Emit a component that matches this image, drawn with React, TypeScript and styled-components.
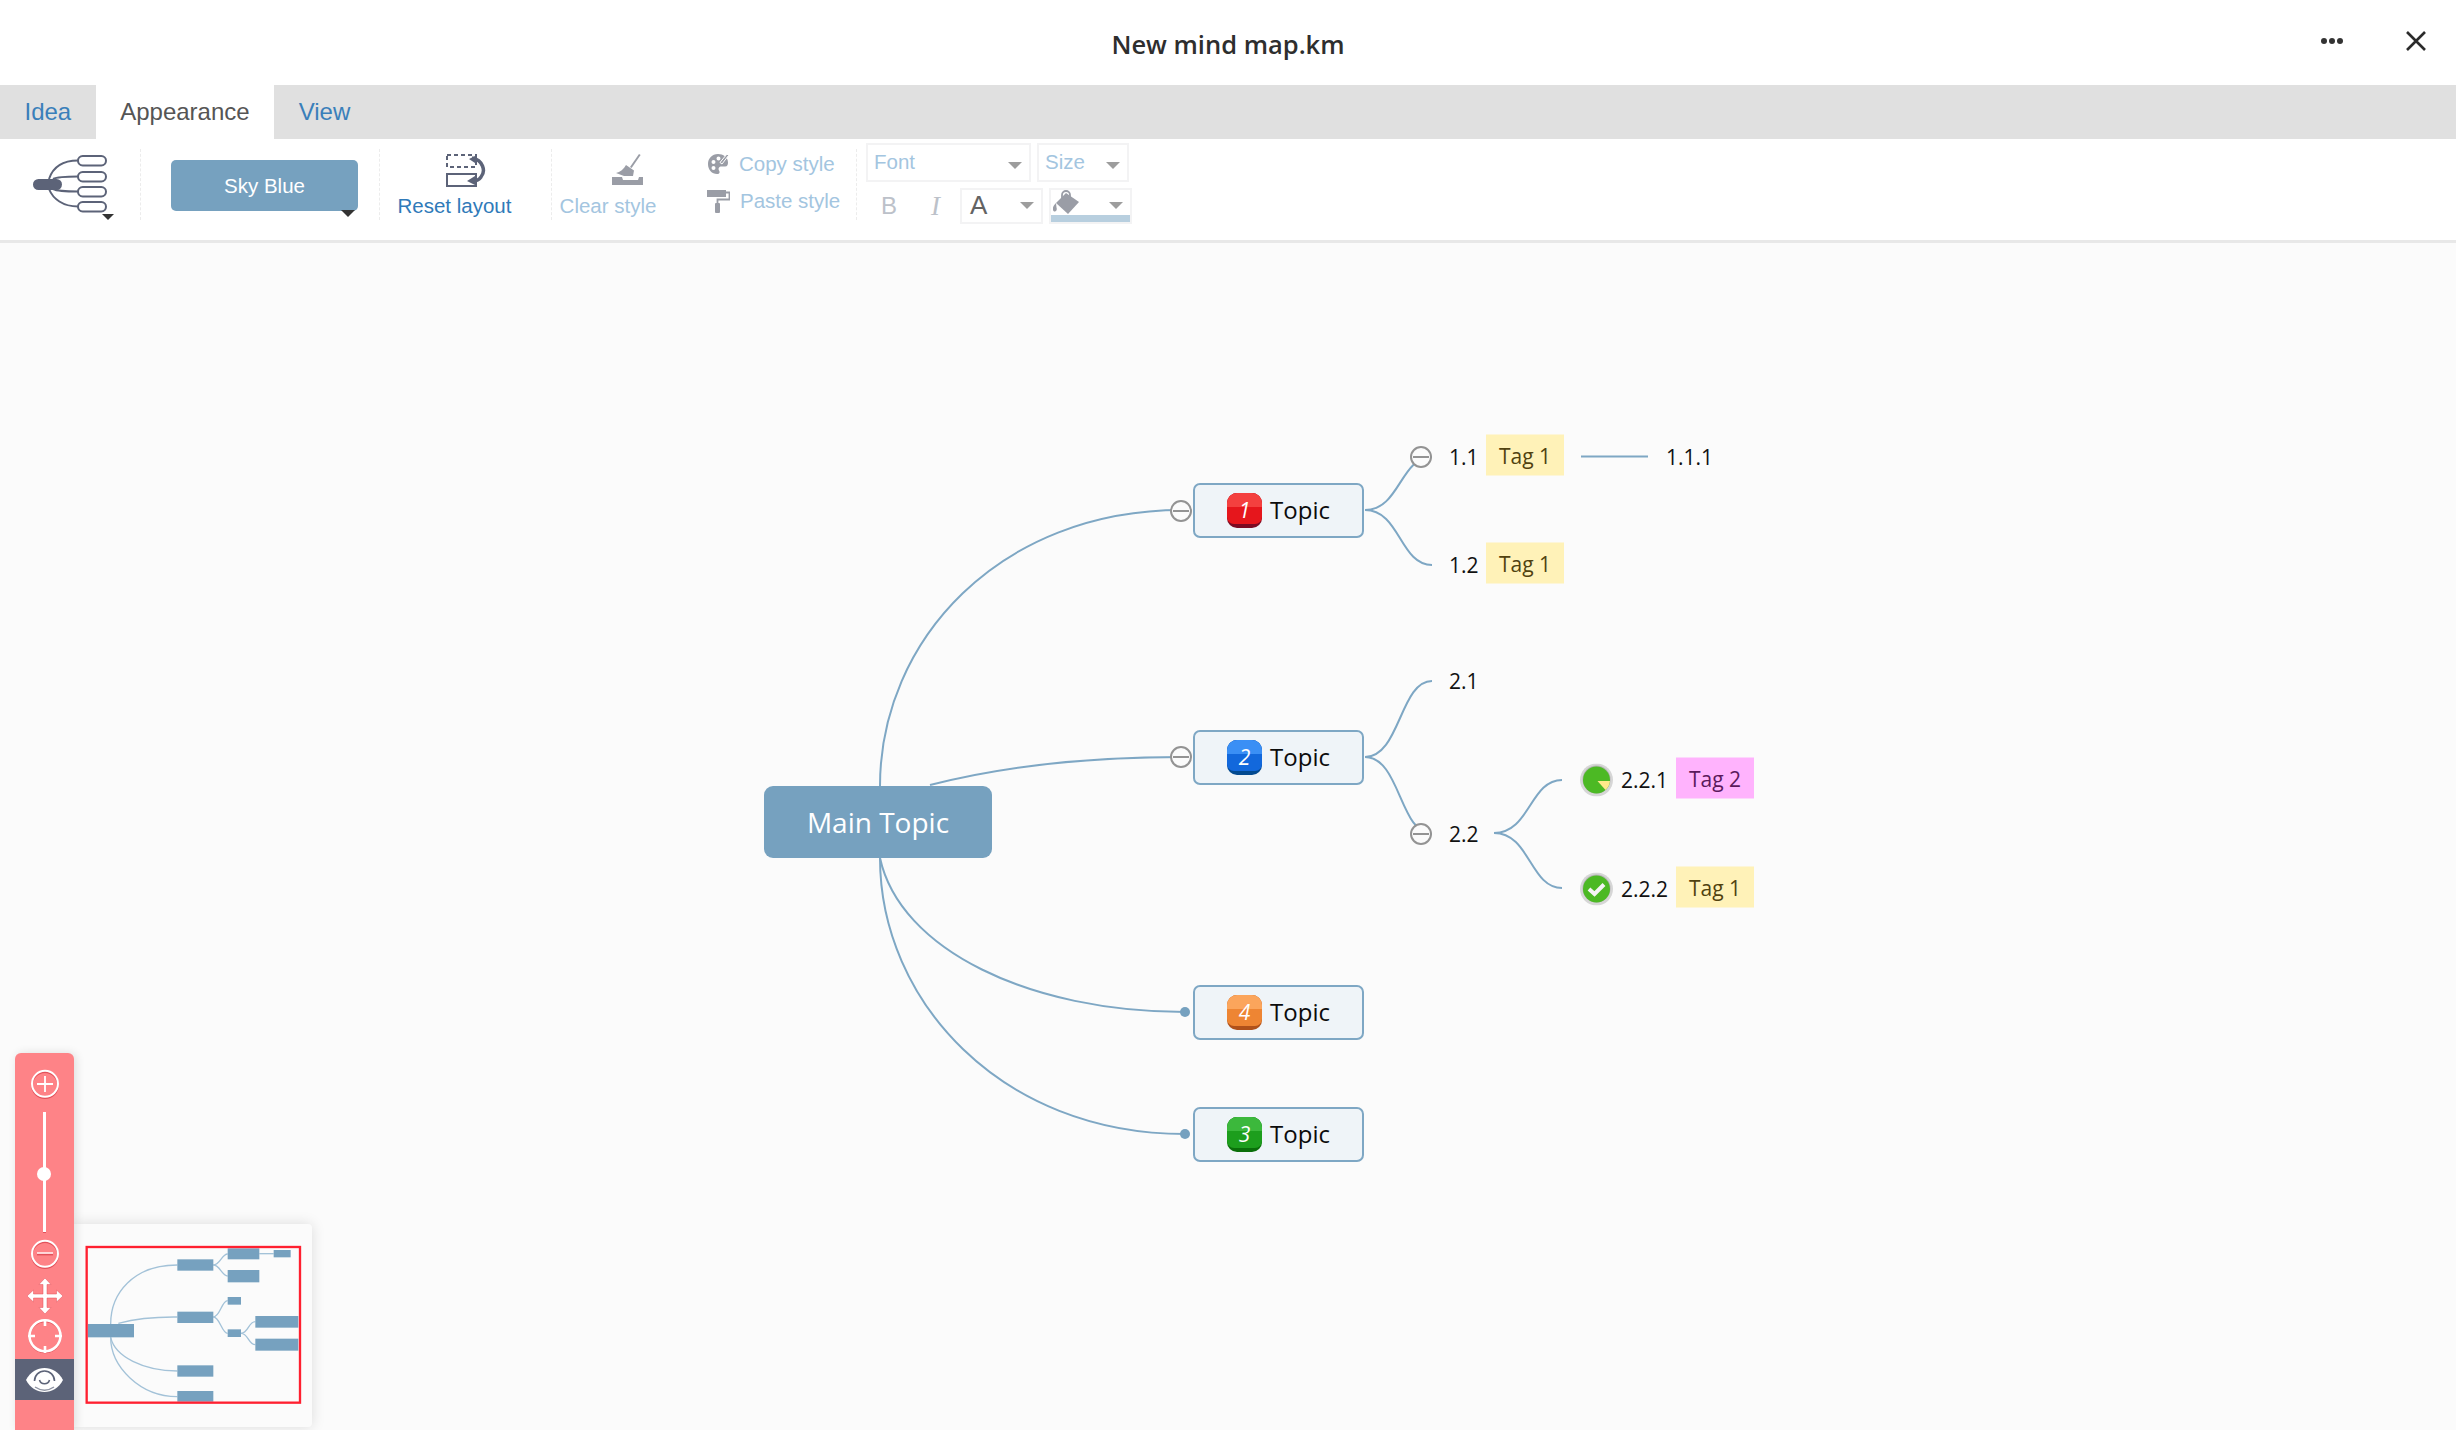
import React from 'react';
import styled, { createGlobalStyle } from 'styled-components';

const CANVAS_TOP = 243;
const SANS = '"Liberation Sans", Arial, sans-serif';
const UI = '"Open Sans", "Noto Sans", sans-serif';

const Global = createGlobalStyle`
  html, body { margin: 0; padding: 0; background: #fff; }
  * { box-sizing: border-box; }
`;

const Page = styled.div`
  width: 2456px; height: 1430px; display: flex; flex-direction: column;
  overflow: hidden; background: #fff; font-family: ${SANS};
`;
const TitleBar = styled.header`
  height: 85px; display: grid; grid-template-columns: 1fr auto 1fr; align-items: center;
`;
const Title = styled.h1`
  grid-column: 2; margin: 3px 0 0; font: 600 25.500px ${UI}; color: #2e2e2e;
`;
const WindowActions = styled.div`
  justify-self: end; display: flex; align-items: center; gap: 62px; padding-right: 30px; margin-top: -3px;
`;
const TabBar = styled.nav`
  height: 54px; display: flex; background: #e0e0e0;
`;
const Tab = styled.div<{ $active?: boolean }>`
  padding: 0 24.500px; display: flex; align-items: center; font-size: 24px;
  color: ${p => (p.$active ? '#555' : '#3a7fba')};
  background: ${p => (p.$active ? '#fff' : 'transparent')};
`;
const Toolbar = styled.div`
  height: 104px; display: flex; align-items: flex-start; background: #fff;
  border-bottom: 3px solid #e8e8e8;
`;
const Section = styled.div<{ $w: number }>`
  width: ${p => p.$w}px; height: 71px; margin-top: 10px; flex: none; display: flex;
  border-right: 1px dashed #ececec;
`;
const TemplateSection = styled(Section)`
  padding: 6px 0 0 33px;
`;
const ThemeSection = styled(Section)`
  padding: 11px 0 0 30px;
`;
const ThemeButton = styled.div`
  position: relative; width: 187px; height: 51px; border-radius: 5px; background: #76a1bf;
  color: #fff; font-size: 20.500px; display: flex; align-items: center; justify-content: center;
`;
const DarkCaret = styled.span`
  position: absolute; right: 3px; bottom: -6px; width: 0; height: 0;
  border-left: 7px solid transparent; border-right: 7px solid transparent; border-top: 7px solid #333;
`;
const ToolColumn = styled.div`
  display: flex; flex-direction: column; align-items: center; padding-top: 5px;
`;
const LayoutSection = styled(Section)`
  justify-content: center; padding-right: 22px;
`;
const ToolLabel = styled.span<{ $off?: boolean }>`
  font-size: 20.500px; line-height: 24px; white-space: nowrap;
  color: ${p => (p.$off ? '#a3c5e0' : '#2f7ab9')};
`;
const ToolIcon = styled.svg<{ $shift: number }>`
  display: block; margin: 0 0 7px ${p => p.$shift}px;
`;
const ClearBlock = styled(ToolColumn)`
  width: 96px; margin-left: 8px; flex: none;
`;
const StyleColumn = styled.div`
  margin: -4px 0 0 51px; display: flex; flex-direction: column;
`;
const StyleRow = styled.div`
  height: 39px; display: flex; align-items: center; gap: 10px;
`;
const FormatSection = styled.div`
  margin-top: 4px; padding-left: 9px; display: flex; flex-direction: column; gap: 6px;
`;
const FormatRow = styled.div`
  display: flex; gap: 6px;
`;
const Combo = styled.div<{ $w: number; $h: number }>`
  position: relative; width: ${p => p.$w}px; height: ${p => p.$h}px; padding: 0 0 1px 6px;
  display: flex; align-items: center; border: 2px solid #f3f3f4;
  font-size: 20.500px; color: #a3c5e0;
`;
const GrayCaret = styled.span<{ $top: number }>`
  position: absolute; right: 7px; top: ${p => p.$top}px; width: 0; height: 0;
  border-left: 7px solid transparent; border-right: 7px solid transparent; border-top: 7px solid #9d9d9d;
`;
const StyleToggles = styled.div`
  display: flex; width: 88px;
`;
const BoldToggle = styled.span`
  width: 46px; text-align: center; font: 24px/36px ${SANS}; color: #bcc1c9;
`;
const ItalicToggle = styled.span`
  width: 42px; padding-left: 5px; text-align: center; font: italic 27px/36px "Liberation Serif", serif; color: #bcc1c9;
`;
const ColorLetter = styled.span`
  font-size: 26px; line-height: 30px; color: #636363; margin: -2px 0 0 2px;
`;
const BucketSlot = styled.span`
  display: flex; margin: -7px 0 0 -4px;
`;
const FillBar = styled.span`
  position: absolute; left: 0; right: 0; bottom: 0; height: 7px; background: #b8cfdf;
`;

const Canvas = styled.main`
  position: relative; flex: 1; background: #fbfbfb;
`;
const Wires = styled.svg`
  position: absolute; left: 0; top: 0;
`;
const MainTopic = styled.div`
  position: absolute; left: 764px; top: ${786 - CANVAS_TOP}px; width: 228px; height: 72px;
  border-radius: 9px; background: #76a1bf; color: #fff; font: 28px ${UI};
  display: flex; align-items: center; justify-content: center;
`;
const Topic = styled.div<{ $y: number }>`
  position: absolute; left: 1193px; top: ${p => p.$y - CANVAS_TOP}px; width: 171px; height: 55px;
  border: 2px solid #7ea7c4; border-radius: 7px; background: #eff4f8;
  display: flex; align-items: center; justify-content: center; gap: 8px;
  font: 24px ${UI}; color: #0c0c0c;
`;
const TopicText = styled.span`
  margin-top: -3px;
`;
const Leaf = styled.div<{ $x: number; $y: number }>`
  position: absolute; left: ${p => p.$x}px; top: ${p => p.$y - CANVAS_TOP}px;
  transform: translateY(-50%); display: flex; align-items: center;
`;
const LeafLabel = styled.span<{ $w?: number }>`
  ${p => (p.$w ? `width: ${p.$w}px;` : '')} margin-left: -1px; margin-top: -1px;
  font: 21px/28px ${UI}; color: #111; white-space: nowrap;
`;
const LeafIcon = styled.svg`
  display: block; margin-right: 9px;
`;
const Tag = styled.span<{ $pink?: boolean }>`
  width: 78px; height: 41px; margin-bottom: 4px; margin-left: 1px; display: flex; align-items: center; justify-content: center;
  font: 21px ${UI};
  background: ${p => (p.$pink ? '#ffb3fd' : '#fff2b8')};
  color: ${p => (p.$pink ? '#5b1a5c' : '#514210')};
`;
const Expander = styled.span<{ $x: number; $y: number }>`
  position: absolute; left: ${p => p.$x - 11}px; top: ${p => p.$y - CANVAS_TOP - 11}px;
  width: 22px; height: 22px; border-radius: 50%; border: 2px solid #939393; background: #fbfbfb;
  &::after {
    content: ''; position: absolute; left: 1px; right: 1px; top: 8px; height: 2px; background: #939393;
  }
`;
const Dot = styled.span<{ $y: number }>`
  position: absolute; left: 1180px; top: ${p => p.$y - CANVAS_TOP - 5}px;
  width: 10px; height: 10px; border-radius: 50%; background: #76a1bf;
`;
const ZoomPanel = styled.aside`
  position: absolute; left: 15px; bottom: 0; z-index: 2; width: 59px; height: 377px; padding-top: 16px;
  display: flex; flex-direction: column; align-items: center;
  border-radius: 6px 6px 0 0; background: #fe8387; box-shadow: 2px 0 10px rgba(0,0,0,.12);
`;
const ZoomIcon = styled.svg<{ $top: number }>`
  display: block; flex: none; margin-top: ${p => p.$top}px;
`;
const SliderTrack = styled.div`
  position: relative; width: 3.500px; height: 120px; margin-top: 13px; flex: none; background: #fff;
  box-shadow: 0 1px 0 #e2515a;
`;
const SliderKnob = styled.span`
  position: absolute; left: -6px; top: 55px; width: 14px; height: 14px; border-radius: 50%; background: #fff;
`;
const EyeTab = styled.div`
  width: 100%; height: 41px; margin-top: 5px; flex: none; background: #5c6378;
  display: flex; align-items: center; justify-content: center;
`;
const NavPreview = styled.div`
  position: absolute; left: 74px; top: ${1224 - CANVAS_TOP}px; z-index: 1; width: 238px; height: 203px;
  border-radius: 0 4px 4px 0; background: #fbfbfb; box-shadow: 0 0 14px rgba(0,0,0,.13);
`;

const gray = '#9a9da6';
const slate = '#5c6378';

const PRIORITY: Record<number, [string, string, string]> = {
  1: ['#f4403f', '#e6161c', '#7c0a22'],
  2: ['#3a8ff5', '#1268dc', '#034a90'],
  3: ['#3cb83c', '#1d9e1d', '#0a6f0a'],
  4: ['#fba55c', '#ee8533', '#b0511a'],
};

const Priority = ({ n }: { n: number }) => {
  const [a, b, c] = PRIORITY[n];
  return (
    <svg width="35" height="35" viewBox="0 0 35 35">
      <rect width="35" height="35" rx="10" fill={c} />
      <path d="M0 10a10 10 0 0 1 10-10h15a10 10 0 0 1 10 10v14a7 7 0 0 1-7 7H7a7 7 0 0 1-7-7Z" fill={b} />
      <path d="M0 10a10 10 0 0 1 10-10h15a10 10 0 0 1 10 10v4H0Z" fill={a} />
      <text x="17.5" y="25" textAnchor="middle" fontFamily={UI} fontStyle="italic" fontSize="21" fill="#fff">{n}</text>
    </svg>
  );
};

const TemplateIcon = () => (
  <svg width="81" height="65" viewBox="0 0 81 65" fill="none" stroke={slate} strokeWidth="2">
    <path d="M16 24C20 12 30 5.500 45 5.500M20 24C24 22 32 21.500 45 21.500M20 34C24 36 32 36.500 45 36.500M16 34C20 44 30 51.500 45 51.500" />
    <rect x="0" y="24" width="29" height="11" rx="5.500" fill={slate} stroke="none" />
    <rect x="45" y="1" width="28" height="9.500" rx="4.700" fill="#fff" />
    <rect x="45" y="17" width="28" height="9.500" rx="4.700" fill="#fff" />
    <rect x="45" y="32" width="28" height="9.500" rx="4.700" fill="#fff" />
    <rect x="45" y="47" width="28" height="9.500" rx="4.700" fill="#fff" />
    <path d="M69 59h12l-6 6z" fill="#333" stroke="none" />
  </svg>
);

const ResetIcon = () => (
  <ToolIcon $shift={23} width="40" height="33" viewBox="0 0 40 33" fill="none" stroke={slate}>
    <rect x="1" y="1" width="29" height="12" strokeWidth="2" strokeDasharray="4 3" />
    <rect x="1" y="20" width="29" height="12" strokeWidth="2" />
    <path d="M26 4C37 6 40 17 35 23C33 26 30 27 27 27" strokeWidth="3.500" />
    <path d="M29 2l-6 3 6 4zM29 22l-8 5 8 4z" fill={slate} stroke="none" />
  </ToolIcon>
);

const BroomIcon = () => (
  <ToolIcon $shift={38} width="31" height="33" viewBox="0 0 31 33" fill={gray}>
    <path d="M27 0l1.600 1-9 13-1.600-1z" />
    <path d="M14 11l8 5.500-1 5.500H12L4 19c4-1 8-4 10-8z" />
    <path d="M0 23h10l1 3h15l1-3h4v8H0z" />
  </ToolIcon>
);

const PaletteIcon = () => (
  <svg width="22" height="22" viewBox="0 0 22 22">
    <path fillRule="evenodd" fill={gray} d="M11 1C5 1 1 5.500 1 11c0 6 4 10 9 10 3 0 3-2 2-3.500-1-2 0-4 2.500-4H18c2.500 0 3-2 3-4C21 4 16 1 11 1ZM6.500 7a2 2 0 1 1 0 4 2 2 0 0 1 0-4Zm5-3.500a2 2 0 1 1 0 4 2 2 0 0 1 0-4ZM6.500 13a2 2 0 1 1 0 4 2 2 0 0 1 0-4Z" />
    <path d="M13 9.500 20 1l1.500 1.500L15 11z" fill={gray} stroke="#fff" strokeWidth="1" />
  </svg>
);

const RollerIcon = () => (
  <svg width="23" height="23" viewBox="0 0 23 23">
    <rect x="0" y="0" width="19" height="7" fill={gray} />
    <path d="M19 2.500h3.500v7H10.500v4" fill="none" stroke={gray} strokeWidth="1.800" />
    <rect x="8" y="13" width="5" height="10" rx="1" fill={gray} />
  </svg>
);

const BucketIcon = () => (
  <svg width="28" height="25" viewBox="0 0 28 25">
    <path d="M13 3l13 9-11 12L3 13z" fill={gray} />
    <path d="M9 10V5a4 4 0 0 1 8 0v5" fill="none" stroke={gray} strokeWidth="1.800" />
    <path d="M3 13c-3 3-4 6-2.500 8 2 1.500 4-.5 3-3.500z" fill={gray} />
  </svg>
);

const ProgressIcon = () => (
  <LeafIcon width="33" height="33" viewBox="-16.500 -16.500 33 33">
    <circle r="16.500" fill="#d6d6d6" />
    <circle r="14" fill="#8f8f8f" cy="-.5" opacity=".45" />
    <circle r="13.500" fill="#4cb924" />
    <path d="M1 1 13.500 1A13.500 13.500 0 0 1 9 10z" fill="#ffe98a" />
  </LeafIcon>
);

const DoneIcon = () => (
  <LeafIcon width="33" height="33" viewBox="-16.500 -16.500 33 33">
    <circle r="16.500" fill="#d6d6d6" />
    <circle r="14" fill="#8f8f8f" cy="-.5" opacity=".45" />
    <circle r="13.500" fill="#4cb924" />
    <path d="M-7.500 0-2 5 7.500-4.500" fill="none" stroke="#f4f4f4" strokeWidth="4" />
  </LeafIcon>
);

const RoundIcon = ({ plus, top }: { plus?: boolean; top: number }) => (
  <ZoomIcon $top={top} width="30" height="30" viewBox="0 0 30 30" fill="none">
    <circle cx="15" cy="16" r="13" stroke="#e2515a" strokeWidth="2" />
    <circle cx="15" cy="14.800" r="13" stroke="#fff" strokeWidth="2" />
    <path d={plus ? 'M7 15h16M15 7v16' : 'M7 15.500h16'} stroke={plus ? '#fff' : '#e2515a'} strokeWidth="1.800" />
    {!plus && <path d="M7 14h16" stroke="#fff" strokeWidth="1.400" />}
  </ZoomIcon>
);

const MoveIcon = () => (
  <ZoomIcon $top={9} width="36" height="36" viewBox="0 0 36 36" fill="#fff">
    <path d="M18 0l6 6.500h-4V16h9.500v-4l6.500 6-6.500 6v-4H20v9.500h4L18 36l-6-6.500h4V20H6.500v4L0 18l6.500-6v4H16V6.500h-4z" stroke="#e2515a" strokeWidth=".5" />
  </ZoomIcon>
);

const LocateIcon = () => (
  <ZoomIcon $top={4} width="36" height="36" viewBox="0 0 36 36" fill="none">
    <circle cx="18" cy="18.800" r="15.500" stroke="#e2515a" strokeWidth="2" />
    <circle cx="18" cy="17.800" r="15.500" stroke="#fff" strokeWidth="2.600" />
    <path d="M18 1v7M18 28v7M1 18h7M28 18h7" stroke="#fff" strokeWidth="2.600" />
  </ZoomIcon>
);

const EyeIcon = () => (
  <svg width="37" height="24" viewBox="0 0 37 24">
    <path d="M0 12C8-4 29-4 37 12 29 28 8 28 0 12Z" fill="#fff" />
    <path d="M8.500 13A10 10 0 0 1 28.500 13" fill="none" stroke="#5c6378" strokeWidth="1.600" />
    <path d="M13.500 12C15 17 22 17 23.500 12" fill="none" stroke="#5c6378" strokeWidth="1.600" />
    <path d="M9 19c6 4 13 4 19 0" fill="none" stroke="#8f94a3" strokeWidth="1.500" />
  </svg>
);

const MAP_LINES = [
  'M880 786C880 640 1000 510 1182 510',
  'M930 785C1000 767 1080 757 1182 757',
  'M880 858C900 950 1030 1012 1185 1012',
  'M880 858C880 1000 1000 1134 1185 1134',
  'M1365 510C1400 510 1400 457 1432 457',
  'M1365 510C1400 510 1400 565 1432 565',
  'M1581 456.500H1648',
  'M1365 757C1400 757 1400 681 1432 681',
  'M1365 757C1400 757 1400 834 1432 834',
  'M1494 833C1530 833 1530 780 1562 780',
  'M1494 833C1530 833 1530 888 1562 888',
];

const MINI_LINES = [
  'M332 852C332 760 400 675 532 675',
  'M355 850C400 838 450 830 532 831',
  'M332 892C345 950 430 992 532 993',
  'M332 892C332 980 420 1070 532 1070',
  'M640 675C660 675 665 642 683 642',
  'M640 675C660 675 665 708 683 708',
  'M778 641H821',
  'M640 831C660 831 665 782 683 782',
  'M640 831C660 831 665 880 683 880',
  'M723 880C745 880 745 845 766 845',
  'M723 880C745 880 745 914 766 914',
];

const MINI_BOXES: [number, number, number, number][] = [
  [264, 852, 138, 40], [532, 658, 108, 34], [532, 815, 108, 34], [532, 976, 108, 34], [532, 1053, 108, 32],
  [683, 625, 95, 33], [683, 690, 95, 37], [821, 630, 51, 22], [683, 771, 40, 23], [683, 868, 40, 23],
  [766, 828, 129, 35], [766, 896, 129, 36],
];

export default function App() {
  return (
    <Page>
      <Global />
      <TitleBar>
        <Title>New mind map.km</Title>
        <WindowActions>
          <svg width="24" height="8" viewBox="0 0 24 8" fill="#333">
            <circle cx="4" cy="4" r="3" /><circle cx="12" cy="4" r="3" /><circle cx="20" cy="4" r="3" />
          </svg>
          <svg width="20" height="20" viewBox="0 0 20 20" stroke="#2b2b2b" strokeWidth="2.600">
            <path d="M1 1l18 18M19 1 1 19" />
          </svg>
        </WindowActions>
      </TitleBar>
      <TabBar>
        <Tab>Idea</Tab>
        <Tab $active>Appearance</Tab>
        <Tab>View</Tab>
      </TabBar>
      <Toolbar>
        <TemplateSection $w={141}><TemplateIcon /></TemplateSection>
        <ThemeSection $w={239}>
          <ThemeButton>Sky Blue<DarkCaret /></ThemeButton>
        </ThemeSection>
        <LayoutSection $w={172}>
          <ToolColumn>
            <ResetIcon />
            <ToolLabel>Reset layout</ToolLabel>
          </ToolColumn>
        </LayoutSection>
        <Section $w={305}>
          <ClearBlock>
            <BroomIcon />
            <ToolLabel $off>Clear style</ToolLabel>
          </ClearBlock>
          <StyleColumn>
            <StyleRow><PaletteIcon /><ToolLabel $off>Copy style</ToolLabel></StyleRow>
            <StyleRow><RollerIcon /><ToolLabel $off>Paste style</ToolLabel></StyleRow>
          </StyleColumn>
        </Section>
        <FormatSection>
          <FormatRow>
            <Combo $w={165} $h={39}>Font<GrayCaret $top={17} /></Combo>
            <Combo $w={92} $h={39}>Size<GrayCaret $top={17} /></Combo>
          </FormatRow>
          <FormatRow>
            <StyleToggles>
              <BoldToggle>B</BoldToggle>
              <ItalicToggle>I</ItalicToggle>
            </StyleToggles>
            <Combo $w={83} $h={36}><ColorLetter>A</ColorLetter><GrayCaret $top={12} /></Combo>
            <Combo $w={83} $h={36}>
              <BucketSlot><BucketIcon /></BucketSlot>
              <GrayCaret $top={12} />
              <FillBar />
            </Combo>
          </FormatRow>
        </FormatSection>
      </Toolbar>
      <Canvas>
        <Wires width="2456" height="1187" viewBox={`0 ${CANVAS_TOP} 2456 1187`} fill="none" stroke="#7ea7c4" strokeWidth="2">
          {MAP_LINES.map(d => <path key={d} d={d} />)}
        </Wires>
        <MainTopic>Main Topic</MainTopic>
        <Topic $y={483}><Priority n={1} /><TopicText>Topic</TopicText></Topic>
        <Topic $y={730}><Priority n={2} /><TopicText>Topic</TopicText></Topic>
        <Topic $y={985}><Priority n={4} /><TopicText>Topic</TopicText></Topic>
        <Topic $y={1107}><Priority n={3} /><TopicText>Topic</TopicText></Topic>

        <Expander $x={1181} $y={511} />
        <Expander $x={1181} $y={757} />
        <Expander $x={1421} $y={457} />
        <Expander $x={1421} $y={834} />
        <Dot $y={1012} />
        <Dot $y={1134} />

        <Leaf $x={1450} $y={457}><LeafLabel $w={36}>1.1</LeafLabel><Tag>Tag 1</Tag></Leaf>
        <Leaf $x={1667} $y={457}><LeafLabel>1.1.1</LeafLabel></Leaf>
        <Leaf $x={1450} $y={565}><LeafLabel $w={36}>1.2</LeafLabel><Tag>Tag 1</Tag></Leaf>
        <Leaf $x={1450} $y={681}><LeafLabel>2.1</LeafLabel></Leaf>
        <Leaf $x={1450} $y={834}><LeafLabel>2.2</LeafLabel></Leaf>
        <Leaf $x={1580} $y={780}><ProgressIcon /><LeafLabel $w={54}>2.2.1</LeafLabel><Tag $pink>Tag 2</Tag></Leaf>
        <Leaf $x={1580} $y={889}><DoneIcon /><LeafLabel $w={54}>2.2.2</LeafLabel><Tag>Tag 1</Tag></Leaf>

        <ZoomPanel>
          <RoundIcon plus top={0} />
          <SliderTrack><SliderKnob /></SliderTrack>
          <RoundIcon top={7} />
          <MoveIcon />
          <LocateIcon />
          <EyeTab><EyeIcon /></EyeTab>
        </ZoomPanel>
        <NavPreview>
          <svg width="238" height="203" viewBox="222 552 714 609" fill="none">
            {MINI_LINES.map(d => <path key={d} d={d} stroke="#a3c2d8" strokeWidth="4" />)}
            {MINI_BOXES.map(([x, y, w, h]) => <rect key={`${x}-${y}`} x={x} y={y} width={w} height={h} fill="#76a1bf" />)}
            <rect x="260" y="621" width="640" height="467" stroke="#ff2030" strokeWidth="7" />
          </svg>
        </NavPreview>
      </Canvas>
    </Page>
  );
}
